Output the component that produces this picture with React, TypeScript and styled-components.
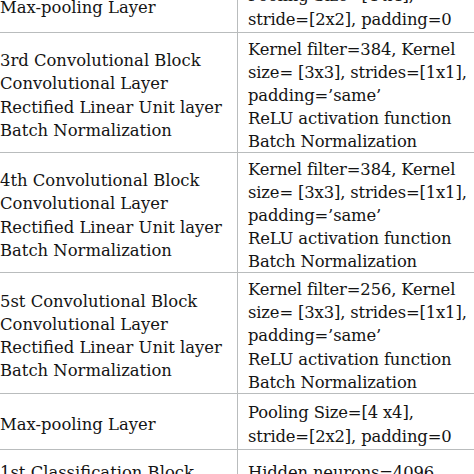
import React from "react";
import styled, { createGlobalStyle } from "styled-components";

const Global = createGlobalStyle`
  html, body {
    margin: 0;
    padding: 0;
    background: #ffffff;
    overflow: hidden;
  }
  body {
    width: 474px;
    height: 474px;
  }
`;

const Table = styled.div`
  display: flex;
  flex-direction: column;
  width: 474px;
  margin-top: -24px;
  font-family: "DejaVu Serif", "Liberation Serif", serif;
  font-size: 16.4px;
  line-height: 23.2px;
  color: #141414;
`;

const Row = styled.div<{ $h: number; $top?: boolean }>`
  display: grid;
  grid-template-columns: 237px 1fr;
  height: ${(p) => p.$h}px;
  box-sizing: border-box;
  border-top: 1px solid ${(p) => (p.$top ? "transparent" : "#b9bcbd")};
  flex: none;
`;

const Cell = styled.div<{ $right?: boolean; $start?: number }>`
  display: flex;
  flex-direction: column;
  justify-content: ${(p) => (p.$start !== undefined ? "flex-start" : "center")};
  padding-top: ${(p) => (p.$start !== undefined ? p.$start : 6)}px;
  padding-left: ${(p) => (p.$right ? 10 : 0)}px;
  border-left: ${(p) => (p.$right ? "1px solid #b9bcbd" : "none")};
  letter-spacing: ${(p) => (p.$right ? "-0.15px" : "0")};
  white-space: nowrap;
  min-height: 0;
`;

const Line = styled.div`
  flex: none;
`;

type RowData = { h: number; left: string[]; right: string[]; start?: number };

const conv = (n: string, filters: string): RowData => ({
  h: 120,
  left: [`${n} Convolutional Block`, "Convolutional Layer", "Rectified Linear Unit layer", "Batch Normalization"],
  right: [
    `Kernel filter=${filters}, Kernel`,
    "size= [3x3], strides=[1x1],",
    "padding=\u2019same\u2019",
    "ReLU activation function",
    "Batch Normalization",
  ],
});

const rows: RowData[] = [
  { h: 56, left: ["Max-pooling Layer"], right: ["Pooling Size=[4 x4],", "stride=[2x2], padding=0"] },
  conv("3rd", "384"),
  conv("4th", "384"),
  { ...conv("5st", "256"), h: 121 },
  { h: 56, left: ["Max-pooling Layer"], right: ["Pooling Size=[4 x4],", "stride=[2x2], padding=0"] },
  {
    h: 80,
    start: 11,
    left: ["1st Classification Block", "Fully Connected Layer"],
    right: ["Hidden neurons=4096", "ReLU activation function"],
  },
];

export default function App() {
  return (
    <>
      <Global />
      <Table>
        {rows.map((r, i) => (
          <Row key={i} $h={r.h} $top={i === 0}>
            <Cell $start={r.start}>
              {r.left.map((t, j) => (
                <Line key={j}>{t}</Line>
              ))}
            </Cell>
            <Cell $right $start={r.start}>
              {r.right.map((t, j) => (
                <Line key={j}>{t}</Line>
              ))}
            </Cell>
          </Row>
        ))}
      </Table>
    </>
  );
}
